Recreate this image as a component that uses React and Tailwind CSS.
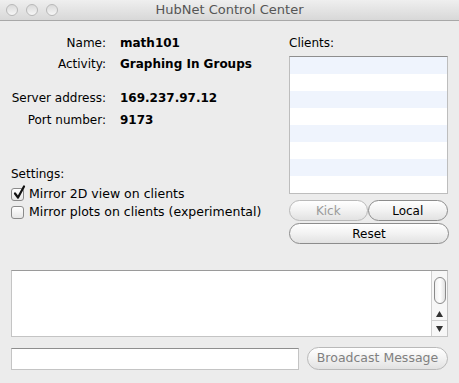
import React from "react";

function Light() {
  return (
    <div className="w-[12px] h-[12px] rounded-full border border-[#b8b8b8] bg-gradient-to-b from-[#dadada] to-[#f6f6f6]" />
  );
}

function Check({ checked }) {
  return (
    <div className="relative w-[13px] h-[13px] rounded-[3px] border border-[#8a8a8a] bg-gradient-to-b from-[#ffffff] to-[#e6e6e6] shrink-0">
      {checked && (
        <svg className="absolute left-[1px] top-[-4px]" width="13" height="15" viewBox="0 0 13 15">
          <path d="M2 8.5 L5 12.5 L11 1.5" fill="none" stroke="#111" strokeWidth="2.2" strokeLinecap="round" strokeLinejoin="round" />
        </svg>
      )}
    </div>
  );
}

function Btn({ children, disabled, className }) {
  return (
    <div
      className={
        "flex items-center justify-center h-[21px] rounded-full border bg-gradient-to-b from-[#ffffff] via-[#f2f2f2] to-[#e2e2e2] " +
        (disabled ? "border-[#b9b9b9] text-[#9a9a9a] " : "border-[#8c8c8c] text-black ") +
        className
      }
    >
      {children}
    </div>
  );
}

export default function App() {
  const rows = [0, 1, 2, 3, 4, 5, 6, 7];
  return (
    <div className="w-[459px] h-[383px] bg-[#ececec] overflow-hidden font-['DejaVu_Sans',sans-serif] text-[12px] text-black">
      <div className="relative h-[21px] border-b border-[#a8a8a8] bg-gradient-to-b from-[#efefef] to-[#d8d8d8] flex items-center">
        <div className="flex gap-[8px] pl-[6px]">
          <Light />
          <Light />
          <Light />
        </div>
        <div className="absolute inset-0 flex items-center justify-center text-[13px] text-[#555]">HubNet Control Center</div>
      </div>

      <div className="flex h-[249px]">
        <div className="w-[289px] pl-[11px] pt-[12px]">
          <div className="grid grid-cols-[95px_auto] gap-x-[14px]">
            <div className="h-[21px] leading-[21px] text-right">Name:</div>
            <div className="h-[21px] leading-[21px] font-bold">math101</div>
            <div className="h-[21px] leading-[21px] text-right">Activity:</div>
            <div className="h-[21px] leading-[21px] font-bold">Graphing In Groups</div>
            <div className="h-[21px] leading-[21px] text-right mt-[13px]">Server address:</div>
            <div className="h-[21px] leading-[21px] font-bold mt-[13px]">169.237.97.12</div>
            <div className="h-[22px] leading-[23px] text-right">Port number:</div>
            <div className="h-[22px] leading-[23px] font-bold">9173</div>
          </div>
          <div className="mt-[33px] h-[20px] leading-[20px]">Settings:</div>
          <div className="mt-[1px] flex items-center gap-[5px] h-[18px] text-[12.5px]">
            <Check checked />
            <span>Mirror 2D view on clients</span>
          </div>
          <div className="flex items-center gap-[5px] h-[18px] text-[12.5px]">
            <Check />
            <span>Mirror plots on clients (experimental)</span>
          </div>
        </div>

        <div className="w-[159px] pt-[12px]">
          <div className="h-[21px] leading-[21px]">Clients:</div>
          <div className="mt-[2px] h-[138px] border border-[#bdbdbd] border-t-[#8e8e8e]">
            {rows.map((i) => (
              <div key={i} className={"h-[17px] " + (i % 2 === 0 ? "bg-[#eff4fd]" : "bg-white")} />
            ))}
          </div>
          <div className="mt-[6px] flex">
            <Btn disabled className="w-[79px]">Kick</Btn>
            <Btn className="w-[81px]">Local</Btn>
          </div>
          <div className="mt-[2px]">
            <Btn className="w-[160px]">Reset</Btn>
          </div>
        </div>
      </div>

      <div className="mx-[11px] h-[67px] border border-[#c4c4c4] border-t-[#9a9a9a] bg-white flex justify-end">
        <div className="w-[16px] h-full border-l border-[#d0d0d0] bg-[#f7f7f7] flex flex-col items-center">
          <div className="mt-[6px] w-[12px] h-[27px] rounded-full border border-[#8a8a8a] bg-gradient-to-r from-[#f0f0f0] via-[#ffffff] to-[#e0e0e0]" />
          <div className="flex-1" />
          <div className="w-full h-[14px] flex items-center justify-center border-b border-[#cfcfcf]">
            <svg width="7" height="6" viewBox="0 0 7 6"><path d="M3.5 0 L7 6 L0 6Z" fill="#333" /></svg>
          </div>
          <div className="w-full h-[15px] flex items-center justify-center">
            <svg width="7" height="6" viewBox="0 0 7 6"><path d="M0 0 L7 0 L3.5 6Z" fill="#333" /></svg>
          </div>
        </div>
      </div>

      <div className="mt-[10px] flex items-center px-[11px]">
        <div className="w-[288px] h-[22px] border border-[#c4c4c4] border-t-[#8e8e8e] bg-white" />
        <Btn disabled className="ml-[8px] w-[141px] !h-[23px] text-[12.5px] !text-[#808080]">Broadcast Message</Btn>
      </div>
    </div>
  );
}
